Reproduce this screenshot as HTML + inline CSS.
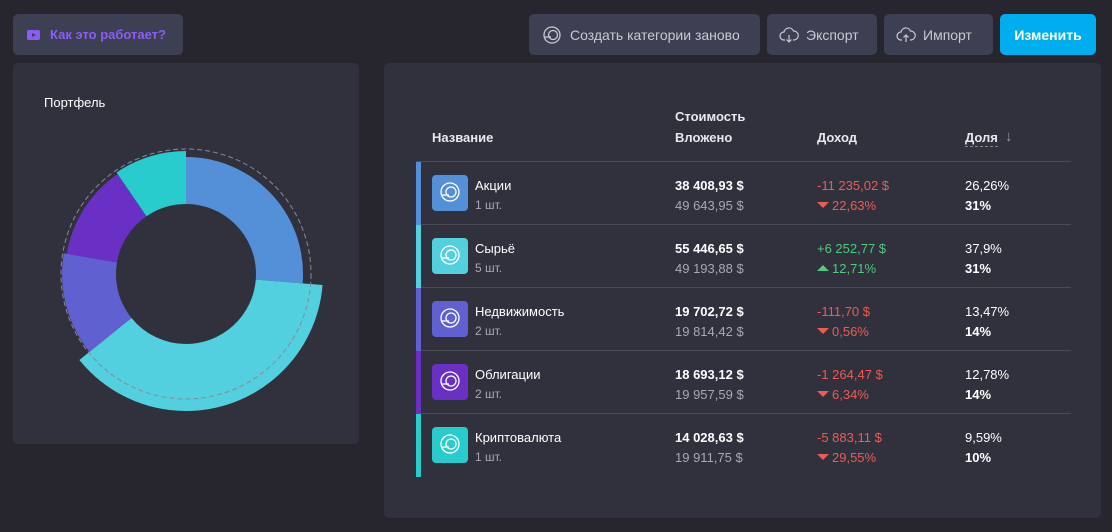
<!DOCTYPE html>
<html><head><meta charset="utf-8"><style>
*{margin:0;padding:0;box-sizing:border-box}
body{width:1112px;height:532px;background:#27262f;font-family:"Liberation Sans","DejaVu Sans",sans-serif;position:relative;overflow:hidden;color:#fff}
.btn{position:absolute;top:14px;height:41px;background:#3d3f52;border-radius:5px;font-size:14px;color:#c9cad3;display:flex;align-items:center}
.card{position:absolute;background:#31313d;border-radius:5px}
.a{position:absolute;white-space:nowrap}
.h{font-size:13px;font-weight:bold;color:#e8e8ee}
.row{position:absolute;left:416px;width:655px;height:63px;border-bottom:1px solid #4a4a58}
.bar{position:absolute;left:0;top:0;width:5px;height:63px}
.ic{position:absolute;left:16px;top:13px;width:36px;height:36px;border-radius:4px}
.n{position:absolute;left:59px;top:16px;font-size:13px;color:#fff}
.s{position:absolute;left:59px;top:36px;font-size:12px;color:#a8a9b4}
.v1{position:absolute;left:259px;top:16px;font-size:13px;font-weight:bold}
.v2{position:absolute;left:259px;top:36px;font-size:13px;color:#a8a9b4}
.d1{position:absolute;left:401px;top:16px;font-size:13px}
.d2{position:absolute;left:401px;top:36px;font-size:13px}
.p1{position:absolute;left:549px;top:16px;font-size:13px}
.p2{position:absolute;left:549px;top:36px;font-size:13px;font-weight:bold}
.r{color:#ee5a55}.g{color:#4ecb7c}
.tri{display:inline-block;width:0;height:0;border-left:6px solid transparent;border-right:6px solid transparent;margin-right:3px;vertical-align:2px}
.dn{border-top:6px solid #ee5a55}.up{border-bottom:6px solid #4ecb7c}
</style></head><body>
<div class="btn" style="left:13px;width:170px;color:#8b5cf6;font-weight:bold;font-size:13px"><span style="display:inline-block;width:13px;height:10px;background:#8b5cf6;border-radius:2px;margin:0 10px 0 14px;position:relative"><span style="position:absolute;left:5px;top:3px;border-left:4px solid #3d3f52;border-top:2px solid transparent;border-bottom:2px solid transparent"></span></span>Как это работает?</div>
<div class="btn" style="left:529px;width:231px"><svg width="20" height="20" style="margin:0 8px 0 13px" viewBox="0 0 20 20" fill="none" stroke="#c9cad3" stroke-width="1.3"><circle cx="10" cy="10" r="8"/><circle cx="11" cy="10" r="4.5"/><path d="M3 12h6"/></svg>Создать категории заново</div>
<div class="btn" style="left:767px;width:110px"><svg width="20" height="20" style="margin:0 7px 0 12px" viewBox="0 0 20 20" fill="none" stroke="#c9cad3" stroke-width="1.2"><path d="M6 15H5a4 4 0 0 1 0-8 5 5 0 0 1 9.5-1A4 4 0 0 1 15 15h-1"/><path d="M10 10v7M7.5 14.5 10 17l2.5-2.5"/></svg>Экспорт</div>
<div class="btn" style="left:884px;width:109px"><svg width="20" height="20" style="margin:0 7px 0 12px" viewBox="0 0 20 20" fill="none" stroke="#c9cad3" stroke-width="1.2"><path d="M6 15H5a4 4 0 0 1 0-8 5 5 0 0 1 9.5-1A4 4 0 0 1 15 15h-1"/><path d="M10 17v-7M7.5 12.5 10 10l2.5 2.5"/></svg>Импорт</div>
<div class="btn" style="left:1000px;width:96px;background:#00aef0;color:#fff;font-weight:bold;justify-content:center">Изменить</div>

<div class="card" style="left:13px;top:63px;width:346px;height:381px"></div>
<div class="a" style="left:44px;top:95px;font-size:13px">Портфель</div>
<svg class="a" style="left:0;top:0" width="380" height="532">
<g transform="rotate(-90 186 274)" fill="none">
<circle cx="186" cy="274" r="93.5" stroke="#5490d8" stroke-width="47" stroke-dasharray="154.3 1000"/>
<circle cx="186" cy="274" r="103.5" stroke="#52d0e0" stroke-width="67" stroke-dasharray="246.5 1000" stroke-dashoffset="-170.8"/>
<circle cx="186" cy="274" r="97" stroke="#6060d0" stroke-width="54" stroke-dasharray="82.1 1000" stroke-dashoffset="-391.1"/>
<circle cx="186" cy="274" r="95.5" stroke="#6a2fc4" stroke-width="51" stroke-dasharray="76.7 1000" stroke-dashoffset="-465.8"/>
<circle cx="186" cy="274" r="96.5" stroke="#28cccc" stroke-width="53" stroke-dasharray="58.1 1000" stroke-dashoffset="-548.2"/>
</g>
<circle cx="186" cy="274" r="125" fill="none" stroke="#8a8a94" stroke-width="1" stroke-dasharray="5 3"/>
</svg>

<div class="card" style="left:384px;top:63px;width:717px;height:455px"></div>
<div class="a h" style="left:432px;top:130px">Название</div>
<div class="a h" style="left:675px;top:109px">Стоимость</div>
<div class="a h" style="left:675px;top:130px">Вложено</div>
<div class="a h" style="left:817px;top:130px">Доход</div>
<div class="a h" style="left:965px;top:130px;border-bottom:1px dashed #888;line-height:16px">Доля</div>
<div class="a" style="left:1005px;top:128px;color:#999;font-size:15px">↓</div>
<div class="a" style="left:416px;top:161px;width:655px;height:1px;background:#4a4a58"></div>

<div class="row" style="top:162px"><div class="bar" style="background:#5490d8"></div><div class="ic" style="background:#5490d8"></div><div class="n">Акции</div><div class="s">1 шт.</div><div class="v1">38 408,93 $</div><div class="v2">49 643,95 $</div><div class="d1 r">-11 235,02 $</div><div class="d2 r"><span class="tri dn"></span>22,63%</div><div class="p1">26,26%</div><div class="p2">31%</div></div>
<div class="row" style="top:225px"><div class="bar" style="background:#52d0e0"></div><div class="ic" style="background:#52d0e0"></div><div class="n">Сырьё</div><div class="s">5 шт.</div><div class="v1">55 446,65 $</div><div class="v2">49 193,88 $</div><div class="d1 g">+6 252,77 $</div><div class="d2 g"><span class="tri up"></span>12,71%</div><div class="p1">37,9%</div><div class="p2">31%</div></div>
<div class="row" style="top:288px"><div class="bar" style="background:#6060d0"></div><div class="ic" style="background:#6060d0"></div><div class="n">Недвижимость</div><div class="s">2 шт.</div><div class="v1">19 702,72 $</div><div class="v2">19 814,42 $</div><div class="d1 r">-111,70 $</div><div class="d2 r"><span class="tri dn"></span>0,56%</div><div class="p1">13,47%</div><div class="p2">14%</div></div>
<div class="row" style="top:351px"><div class="bar" style="background:#6a2fc4"></div><div class="ic" style="background:#6a2fc4"></div><div class="n">Облигации</div><div class="s">2 шт.</div><div class="v1">18 693,12 $</div><div class="v2">19 957,59 $</div><div class="d1 r">-1 264,47 $</div><div class="d2 r"><span class="tri dn"></span>6,34%</div><div class="p1">12,78%</div><div class="p2">14%</div></div>
<div class="row" style="top:414px;border-bottom:none"><div class="bar" style="background:#28cccc"></div><div class="ic" style="background:#28cccc"></div><div class="n">Криптовалюта</div><div class="s">1 шт.</div><div class="v1">14 028,63 $</div><div class="v2">19 911,75 $</div><div class="d1 r">-5 883,11 $</div><div class="d2 r"><span class="tri dn"></span>29,55%</div><div class="p1">9,59%</div><div class="p2">10%</div></div>

<svg class="a" style="left:0;top:0" width="1112" height="532" fill="none" stroke="#fff" stroke-width="1.3">
<g><circle cx="450" cy="192" r="9"/><circle cx="451" cy="192" r="5"/><path d="M442 195h7"/></g>
<g transform="translate(0,63)"><circle cx="450" cy="192" r="9"/><circle cx="451" cy="192" r="5"/><path d="M442 195h7"/></g>
<g transform="translate(0,126)"><circle cx="450" cy="192" r="9"/><circle cx="451" cy="192" r="5"/><path d="M442 195h7"/></g>
<g transform="translate(0,189)"><circle cx="450" cy="192" r="9"/><circle cx="451" cy="192" r="5"/><path d="M442 195h7"/></g>
<g transform="translate(0,252)"><circle cx="450" cy="192" r="9"/><circle cx="451" cy="192" r="5"/><path d="M442 195h7"/></g>
</svg>
</body></html>
